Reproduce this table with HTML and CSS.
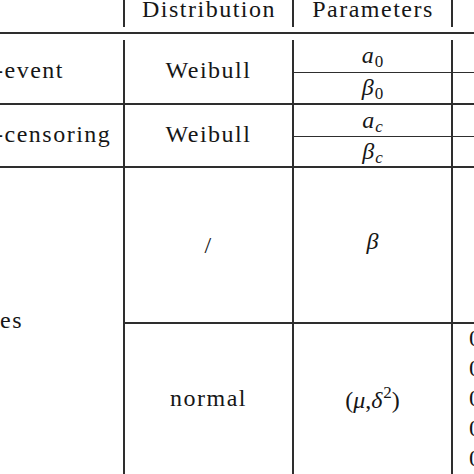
FILE: index.html
```html
<!DOCTYPE html>
<html>
<head>
<meta charset="utf-8">
<link rel="stylesheet" href="styles.css">
</head>
<body>
<div class="table">
  <div class="row head">
    <div class="c1"></div>
    <div class="c2 vl"><span class="ht">Distribution</span></div>
    <div class="c3 vl"><span class="ht">Parameters</span></div>
    <div class="c4 vl"></div>
  </div>
  <div class="toprule"></div>

  <div class="row body r-event">
    <div class="c1 lab"><span class="cut">-event</span></div>
    <div class="c2 vl txt"><span class="w">Weibull</span></div>
    <div class="grp">
      <div class="sub s-a0 split">
        <div class="c3 vl math"><span class="eq"><i>a</i><sub>0</sub></span></div>
        <div class="c4 vl"></div>
      </div>
      <div class="sub s-b0">
        <div class="c3 vl math"><span class="eq"><i>β</i><sub>0</sub></span></div>
        <div class="c4 vl"></div>
      </div>
    </div>
  </div>

  <div class="row body r-cens">
    <div class="c1 lab"><span class="cut">-censoring</span></div>
    <div class="c2 vl txt"><span class="w">Weibull</span></div>
    <div class="grp">
      <div class="sub s-ac split">
        <div class="c3 vl math"><span class="eq"><i>a</i><sub><i>c</i></sub></span></div>
        <div class="c4 vl"></div>
      </div>
      <div class="sub s-bc">
        <div class="c3 vl math"><span class="eq"><i>β</i><sub><i>c</i></sub></span></div>
        <div class="c4 vl"></div>
      </div>
    </div>
  </div>

  <div class="row r-cov">
    <div class="c1 lab"><span class="es">es</span></div>
    <div class="grp">
      <div class="sub s-top splitw">
        <div class="c2 vl txt slash"><span class="w">/</span></div>
        <div class="c3 vl math beta"><span class="eq"><i>β</i></span></div>
        <div class="c4 vl"></div>
      </div>
      <div class="sub s-bot">
        <div class="c2 vl txt"><span class="w">normal</span></div>
        <div class="c3 vl math"><span class="eq">(<i>μ</i>,<i>δ</i><sup>2</sup>)</span></div>
        <div class="c4 vl vals">
          <span>0</span><span>0</span><span>0</span><span>0</span><span>0</span>
        </div>
      </div>
    </div>
  </div>
</div>
</body>
</html>
```

FILE: styles.css
```css
html, body {
  margin: 0;
  padding: 0;
  background: #ffffff;
}

body {
  font-size: 24px;
  font-family: "Liberation Serif", "Times New Roman", serif;
}

.table {
  display: flex;
  flex-direction: column;
  width: 474px;
  height: 474px;
  overflow: hidden;
  color: #161616;
}

.ht, .lab, .txt, .w, .cut, .es, .eq, .vals {
  font-family: "Liberation Serif", "Times New Roman", serif;
  font-size: 24px;
}

.row {
  display: flex;
  flex: none;
  box-sizing: border-box;
}

.c1 {
  width: 123px;
  flex: none;
  box-sizing: border-box;
}

.c2 {
  width: 169px;
  flex: none;
  box-sizing: border-box;
}

.c3 {
  width: 159px;
  flex: none;
  box-sizing: border-box;
}

.c4 {
  flex: 1;
  min-width: 0;
  box-sizing: border-box;
  overflow: hidden;
}

.vl {
  border-left: 2px solid #2e2e2e;
}

/* header */
.head {
  height: 27px;
}

.head .c2,
.head .c3 {
  display: flex;
  justify-content: center;
  align-items: flex-start;
}

.ht {
  letter-spacing: 1.5px;
  line-height: 18px;
  margin-left: 1px;
}

.toprule {
  flex: none;
  height: 2px;
  background: #2e2e2e;
  margin-top: 5px;
  margin-bottom: 6px;
}

/* body rows */
.body {
  border-bottom: 2px solid #2e2e2e;
}

.r-event {
  height: 65px;
}

.r-cens {
  height: 63px;
}

.grp {
  flex: 1;
  display: flex;
  flex-direction: column;
  min-height: 0;
}

.sub {
  display: flex;
  box-sizing: border-box;
}

.split {
  border-bottom: 1.5px solid #2e2e2e;
}

.s-a0 {
  flex: none;
  height: 32.5px;
}

.s-b0 {
  flex: 1;
}

.s-ac {
  flex: none;
  height: 31.5px;
}

.s-bc {
  flex: 1;
}

.lab {
  display: flex;
  align-items: center;
  padding-bottom: 3px;
  letter-spacing: 1.5px;
  white-space: nowrap;
  overflow: hidden;
}

.cut {
  margin-left: -5px;
}

.txt {
  display: flex;
  justify-content: center;
  align-items: center;
  padding-bottom: 3px;
  letter-spacing: 1.5px;
}

.math {
  display: flex;
  justify-content: center;
  align-items: center;
  white-space: nowrap;
}

.eq {
  display: block;
}

.eq i {
  font-style: italic;
}

.eq sub {
  font-size: 17px;
  line-height: 0;
  vertical-align: -4px;
  margin-left: 1px;
}

.eq sup {
  font-size: 17px;
  line-height: 0;
  vertical-align: 10px;
  margin-left: 1px;
}

/* covariates block */
.r-cov {
  height: 308px;
}

.splitw {
  flex: none;
  border-bottom: 2px solid #2e2e2e;
  height: 156px;
}

.s-bot {
  flex: 1;
  min-height: 0;
}

.slash {
  padding-bottom: 0;
}

.beta {
  padding-bottom: 8px;
}

.vals {
  display: flex;
  flex-direction: column;
  justify-content: center;
  padding-left: 16px;
  line-height: 30px;
  padding-bottom: 4px;
}
```
